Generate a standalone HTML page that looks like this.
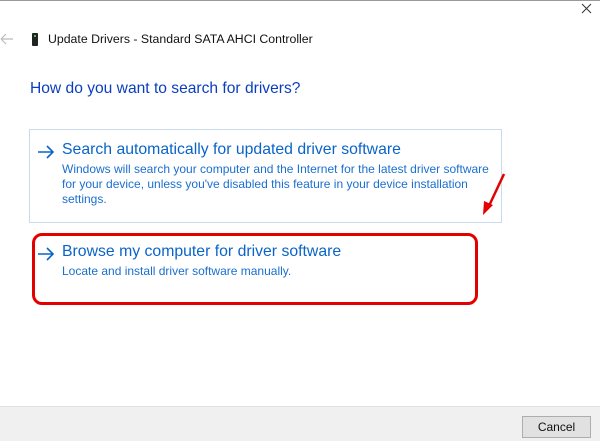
<!DOCTYPE html>
<html><head><style>
body{margin:0;width:600px;height:440px;background:#fff;font-family:"Liberation Sans",sans-serif;position:relative;overflow:hidden}
.a{position:absolute}
.h{color:#0a64c8;font-size:15.8px}
.d{color:#1a6fd0;font-size:12px;line-height:15px}
</style></head><body>
<div class="a" style="left:0;top:0;width:600px;height:1px;background:#9a9a9a"></div>
<svg class="a" style="left:581px;top:3px" width="12" height="12"><path d="M1 1L10 10M10 1L1 10" stroke="#333" stroke-width="1"/></svg>
<svg class="a" style="left:0;top:33px" width="14" height="12"><path d="M1 6H13M1 6L6 1M1 6L6 11" stroke="#bbb" stroke-width="1.2" fill="none"/></svg>
<div class="a" style="left:32px;top:33px;width:6px;height:13px;background:#222;border-radius:1px"></div>
<div class="a" style="left:34px;top:35px;width:2px;height:2px;background:#3c3"></div>
<div class="a" style="left:48px;top:32px;font-size:12.3px;color:#111">Update Drivers - Standard SATA AHCI Controller</div>
<div class="a" style="left:30px;top:80px;font-size:15.6px;color:#0a3ebf">How do you want to search for drivers?</div>
<div class="a" style="left:29px;top:129px;width:471px;height:92px;border:1px solid #c8dcee"></div>
<svg class="a" style="left:37px;top:145px" width="18" height="14"><path d="M1 7H16M10 1L16 7L10 13" stroke="#0a64c8" stroke-width="1.6" fill="none"/></svg>
<div class="a h" style="left:62px;top:141px">Search automatically for updated driver software</div>
<div class="a d" style="left:62px;top:162px;width:440px">Windows will search your computer and the Internet for the latest driver software for your device, unless you've disabled this feature in your device installation settings.</div>
<div class="a" style="left:32px;top:233px;width:440px;height:66px;border:3px solid #e30000;border-radius:10px"></div>
<svg class="a" style="left:37px;top:247px" width="18" height="14"><path d="M1 7H16M10 1L16 7L10 13" stroke="#0a64c8" stroke-width="1.6" fill="none"/></svg>
<div class="a h" style="left:62px;top:243px">Browse my computer for driver software</div>
<div class="a d" style="left:62px;top:264px">Locate and install driver software manually.</div>
<svg class="a" style="left:478px;top:170px" width="30" height="50"><line x1="26" y1="4" x2="10" y2="38" stroke="#e30000" stroke-width="2.5"/><polygon points="5,45 6,31 15,35" fill="#e30000"/></svg>
<div class="a" style="left:0;top:406px;width:600px;height:34px;background:#f0f0f0;border-top:1px solid #e0e0e0"></div>
<div class="a" style="left:522px;top:416px;width:67px;height:20px;border:1px solid #adadad;background:#e1e1e1;font-size:12px;color:#111;text-align:center;line-height:20px">Cancel</div>
</body></html>
